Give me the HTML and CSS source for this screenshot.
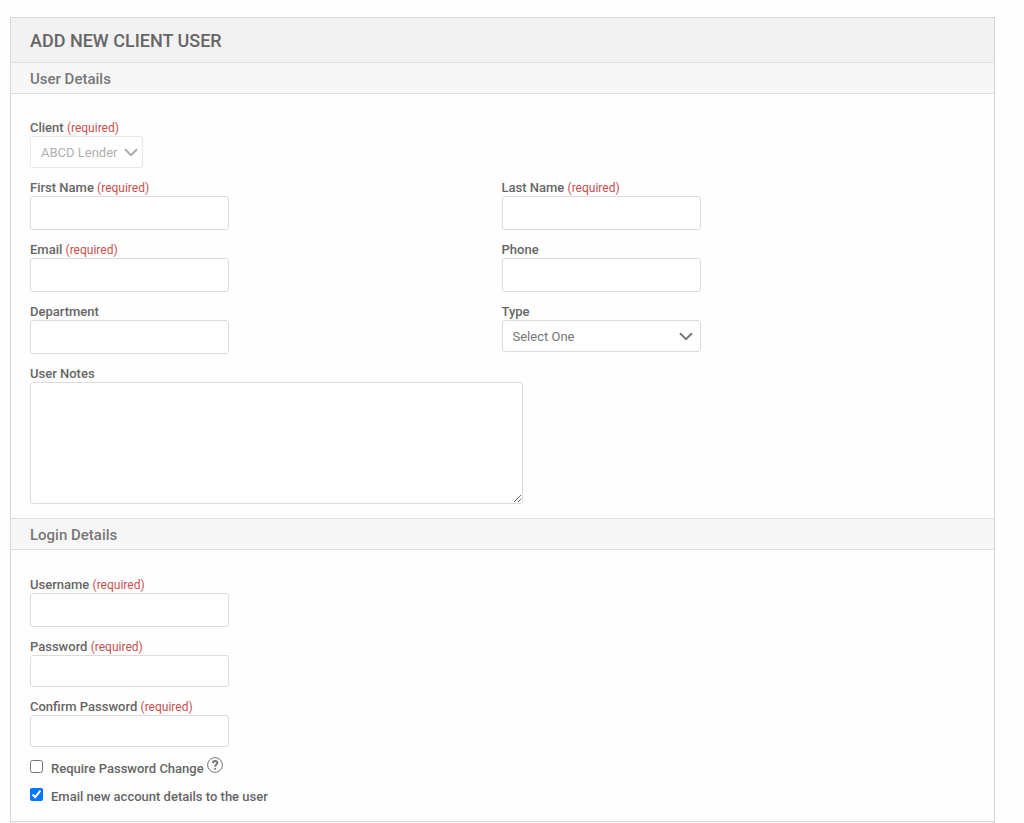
FILE: index.html
```html
<!DOCTYPE html>
<html lang="en">
<head>
<meta charset="utf-8">
<meta name="viewport" content="width=device-width, initial-scale=1">
<title>Add New Client User</title>
<link rel="stylesheet" href="styles.css">
</head>
<body>
<form class="panel">
  <h1 class="panel-title">ADD NEW CLIENT USER</h1>

  <h2 class="section-title">User Details</h2>
  <div class="section-body">
    <div class="field">
      <label for="client">Client <span class="required">(required)</span></label>
      <div class="select select-auto select-disabled">
        <select id="client" disabled><option>ABCD Lender</option></select>
        <svg class="chevron" viewBox="0 0 14 9" aria-hidden="true"><path d="M1 1.2 7 7.2 13 1.2"/></svg>
      </div>
    </div>
    <div class="columns">
      <div class="field">
        <label for="first">First Name <span class="required">(required)</span></label>
        <input class="control" id="first" type="text">
      </div>
      <div class="field">
        <label for="last">Last Name <span class="required">(required)</span></label>
        <input class="control" id="last" type="text">
      </div>
      <div class="field">
        <label for="email">Email <span class="required">(required)</span></label>
        <input class="control" id="email" type="email">
      </div>
      <div class="field">
        <label for="phone">Phone</label>
        <input class="control" id="phone" type="tel">
      </div>
      <div class="field">
        <label for="department">Department</label>
        <input class="control" id="department" type="text">
      </div>
      <div class="field">
        <label for="type">Type</label>
        <div class="select">
          <select id="type"><option>Select One</option></select>
          <svg class="chevron" viewBox="0 0 14 9" aria-hidden="true"><path d="M1 1.2 7 7.2 13 1.2"/></svg>
        </div>
      </div>
    </div>
    <div class="field">
      <label for="notes">User Notes</label>
      <textarea class="control notes" id="notes"></textarea>
    </div>
  </div>

  <h2 class="section-title section-divided">Login Details</h2>
  <div class="section-body section-login">
    <div class="field">
      <label for="username">Username <span class="required">(required)</span></label>
      <input class="control" id="username" type="text">
    </div>
    <div class="field">
      <label for="password">Password <span class="required">(required)</span></label>
      <input class="control control-short" id="password" type="password">
    </div>
    <div class="field field-tight">
      <label for="confirm">Confirm Password <span class="required">(required)</span></label>
      <input class="control control-short" id="confirm" type="password">
    </div>
    <div class="check">
      <input id="change" type="checkbox">
      <label for="change">Require Password Change</label>
      <button class="help" type="button" aria-label="Help">
        <svg viewBox="0 0 16 16" aria-hidden="true"><circle cx="8" cy="8" r="7.4"/><path class="mark" d="M5.8 6.1C5.9 4.6 6.8 3.9 8.1 3.9c1.3 0 2.2.7 2.2 1.900C10.300 7.500 8.100 7.600 8.100 9.700M8.100 10.900v1.500"/></svg>
      </button>
    </div>
    <div class="check">
      <input id="notify" type="checkbox" checked>
      <label for="notify">Email new account details to the user</label>
    </div>
  </div>
  <div class="panel-footer"></div>
</form>
</body>
</html>
```
FILE: styles.css
```css
* {
  box-sizing: border-box;
}

body {
  margin: 0;
  padding: 17px 29px 0 10px;
  background: #fefefe;
  color: #666;
  font-family: Roboto, "Liberation Sans", sans-serif;
  font-size: 13px;
  line-height: 18px;
}

.panel {
  border: 1px solid #d5dad7;
  border-bottom: 0;
}

.panel-title,
.section-title {
  margin: 0;
  padding: 2px 19px 0;
  border-bottom: 1px solid #dcdfdd;
  font-weight: 500;
}

.panel-title {
  background: #f2f2f2;
  font-size: 18px;
  line-height: 42px;
}

.section-title {
  background: #f7f7f7;
  color: #777;
  font-size: 15px;
  line-height: 28px;
}

.section-divided {
  border-top: 1px solid #dcdfdd;
}

.section-body {
  padding: 24px 21px 14px 19px;
}

.section-login {
  padding-top: 25px;
  padding-bottom: 11px;
}

.columns {
  display: grid;
  grid-template-columns: 1fr 1fr;
}

.field {
  display: flex;
  flex-direction: column;
  align-items: flex-start;
  margin-bottom: 10px;
}

.field-tight {
  margin-bottom: 7px;
}

.section-body > .field:last-child {
  margin-bottom: 0;
}

label {
  padding-top: 2px;
  font-weight: 500;
  line-height: 16px;
}

.required {
  color: #c8504f;
  font-size: 12px;
  font-weight: 400;
}

.control,
.select select {
  border: 1px solid #dcdcdc;
  border-radius: 3px;
  background: #fff;
  color: #777;
  font: inherit;
}

.control {
  width: 199px;
  max-width: 100%;
  height: 34px;
  padding: 0 11px;
}

.control-short {
  height: 32px;
}

.notes {
  width: 493px;
  height: 122px;
}

.select {
  display: grid;
  align-items: center;
  width: 199px;
  max-width: 100%;
}

.select-auto {
  width: auto;
}

.select select,
.chevron {
  grid-area: 1 / 1;
}

.select select {
  width: 100%;
  height: 32px;
  padding: 2px 24px 0 10px;
  appearance: none;
}

.chevron {
  justify-self: end;
  width: 14px;
  height: 9px;
  margin-right: 8px;
  fill: none;
  stroke: #777;
  stroke-width: 2;
  pointer-events: none;
}

.select-disabled select {
  border-color: #e8e8e8;
  color: #b0b0b0;
  opacity: 1;
}

.select-disabled .chevron {
  margin-right: 5px;
  stroke: #aaa;
}

.check {
  display: flex;
  align-items: center;
  height: 28px;
}

.check input {
  width: 13px;
  height: 13px;
  margin: 0 8px 4px 0;
}

.help {
  width: 16px;
  height: 16px;
  margin: 0 0 6px 3px;
  padding: 0;
  border: 0;
  background: none;
}

.help svg {
  display: block;
  fill: none;
  stroke: #777;
  stroke-width: 1;
}

.help .mark {
  stroke-width: 2;
}

.panel-footer {
  min-height: 2px;
  border-top: 1px solid #d5dad7;
  background: #f7f7f7;
}
```
